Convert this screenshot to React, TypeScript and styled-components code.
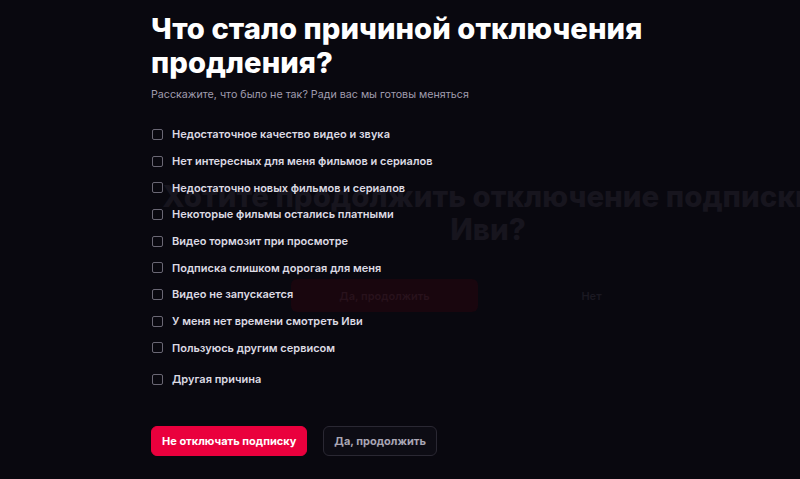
import React from "react";
import styled, { createGlobalStyle } from "styled-components";

const Global = createGlobalStyle`
  html, body { margin: 0; padding: 0; background: #09080f; }
  body { font-family: Inter, "Noto Sans", sans-serif; -webkit-font-smoothing: antialiased; }
  * { box-sizing: border-box; }
`;

const Page = styled.div`
  position: relative;
  width: 800px;
  height: 479px;
  overflow: hidden;
  background: #09080f;
`;

const Ghost = styled.div`
  position: absolute;
  left: 158px;
  top: 180px;
  width: 660px;
  display: flex;
  flex-direction: column;
  align-items: center;
  pointer-events: none;
`;

const GhostTitle = styled.div`
  font-size: 29.5px;
  line-height: 33px;
  font-weight: 800;
  color: #17151e;
  text-align: center;
  white-space: nowrap;
`;

const GhostButtons = styled.div`
  display: flex;
  gap: 20px;
  margin-top: 33px;
`;

const GhostButton = styled.div<{ $red?: boolean }>`
  width: 187px;
  height: 33px;
  border-radius: 6px;
  display: flex;
  align-items: center;
  justify-content: center;
  font-size: 11px;
  font-weight: 600;
  background: ${(p) => (p.$red ? "#19060e" : "transparent")};
  color: ${(p) => (p.$red ? "#28121c" : "#1b1922")};
`;

const Main = styled.div`
  position: relative;
  padding: 12px 0 0 151px;
  display: flex;
  flex-direction: column;
`;

const Title = styled.h1`
  margin: 0;
  font-size: 29.2px;
  line-height: 34px;
  font-weight: 800;
  color: #ffffff;
  letter-spacing: 0.05px;
  width: 520px;
`;

const Subtitle = styled.p`
  margin: 8px 0 0;
  font-size: 10.7px;
  line-height: 14px;
  color: #a09cae;
`;

const List = styled.div`
  margin-top: 19px;
  display: flex;
  flex-direction: column;
`;

const Row = styled.label<{ $extra?: boolean }>`
  display: flex;
  align-items: center;
  gap: 9px;
  height: 26.7px;
  margin-top: ${(p) => (p.$extra ? "4.5px" : "0")};
  cursor: pointer;
`;

const Box = styled.span`
  width: 11px;
  height: 11px;
  margin-left: 1px;
  border: 1.5px solid #6a6774;
  border-radius: 2px;
  flex: none;
`;

const RowText = styled.span`
  font-size: 11px;
  font-weight: 600;
  color: #dcdae3;
`;

const Actions = styled.div`
  display: flex;
  gap: 16px;
  margin-top: 34px;
`;

const Button = styled.button<{ $primary?: boolean }>`
  height: 30px;
  padding: 0 ${(p) => (p.$primary ? "10px" : "10px")};
  border-radius: 6px;
  font-family: inherit;
  font-size: 11px;
  font-weight: 700;
  cursor: pointer;
  border: 1px solid ${(p) => (p.$primary ? "#ea003d" : "#2a2833")};
  background: ${(p) => (p.$primary ? "#ea003d" : "#0d0c14")};
  color: ${(p) => (p.$primary ? "#ffffff" : "#a9a6b4")};
`;

const reasons = [
  "Недостаточное качество видео и звука",
  "Нет интересных для меня фильмов и сериалов",
  "Недостаточно новых фильмов и сериалов",
  "Некоторые фильмы остались платными",
  "Видео тормозит при просмотре",
  "Подписка слишком дорогая для меня",
  "Видео не запускается",
  "У меня нет времени смотреть Иви",
  "Пользуюсь другим сервисом",
];

export default function App() {
  return (
    <Page>
      <Global />
      <Ghost>
        <GhostTitle>Хотите продолжить отключение подписки</GhostTitle>
        <GhostTitle>Иви?</GhostTitle>
        <GhostButtons>
          <GhostButton $red>Да, продолжить</GhostButton>
          <GhostButton>Нет</GhostButton>
        </GhostButtons>
      </Ghost>
      <Main>
        <Title>Что стало причиной отключения продления?</Title>
        <Subtitle>Расскажите, что было не так? Ради вас мы готовы меняться</Subtitle>
        <List>
          {reasons.map((r) => (
            <Row key={r}>
              <Box />
              <RowText>{r}</RowText>
            </Row>
          ))}
          <Row $extra>
            <Box />
            <RowText>Другая причина</RowText>
          </Row>
        </List>
        <Actions>
          <Button $primary>Не отключать подписку</Button>
          <Button>Да, продолжить</Button>
        </Actions>
      </Main>
    </Page>
  );
}
